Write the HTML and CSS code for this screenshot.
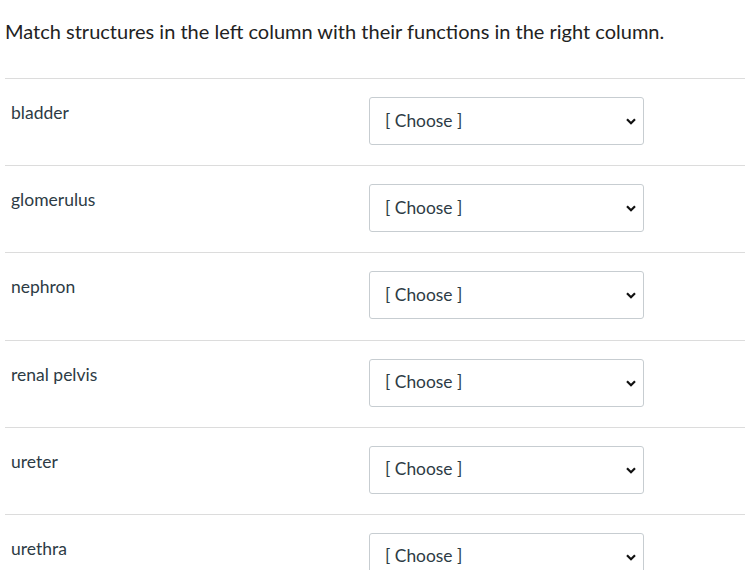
FILE: index.html
```html
<!DOCTYPE html>
<html>
<head>
<meta charset="utf-8">
<link rel="stylesheet" href="styles.css">
</head>
<body>
<div class="page">
  <p class="question">Match structures in the left column with their functions in the right column.</p>
  <div class="rows">
    <div class="row"><div class="label">bladder</div><div class="select"><span class="choose">[ Choose ]</span><svg class="chev" viewBox="0 0 10 7" width="10" height="7"><path d="M1 1.2 L5 5.2 L9 1.2" fill="none" stroke="#111" stroke-width="2.2"/></svg></div></div>
    <div class="row"><div class="label">glomerulus</div><div class="select"><span class="choose">[ Choose ]</span><svg class="chev" viewBox="0 0 10 7" width="10" height="7"><path d="M1 1.2 L5 5.2 L9 1.2" fill="none" stroke="#111" stroke-width="2.2"/></svg></div></div>
    <div class="row"><div class="label">nephron</div><div class="select"><span class="choose">[ Choose ]</span><svg class="chev" viewBox="0 0 10 7" width="10" height="7"><path d="M1 1.2 L5 5.2 L9 1.2" fill="none" stroke="#111" stroke-width="2.2"/></svg></div></div>
    <div class="row"><div class="label">renal pelvis</div><div class="select"><span class="choose">[ Choose ]</span><svg class="chev" viewBox="0 0 10 7" width="10" height="7"><path d="M1 1.2 L5 5.2 L9 1.2" fill="none" stroke="#111" stroke-width="2.2"/></svg></div></div>
    <div class="row"><div class="label">ureter</div><div class="select"><span class="choose">[ Choose ]</span><svg class="chev" viewBox="0 0 10 7" width="10" height="7"><path d="M1 1.2 L5 5.2 L9 1.2" fill="none" stroke="#111" stroke-width="2.2"/></svg></div></div>
    <div class="row"><div class="label">urethra</div><div class="select"><span class="choose">[ Choose ]</span><svg class="chev" viewBox="0 0 10 7" width="10" height="7"><path d="M1 1.2 L5 5.2 L9 1.2" fill="none" stroke="#111" stroke-width="2.2"/></svg></div></div>
  </div>
</div>
</body>
</html>
```

FILE: styles.css
```css
html, body {
  margin: 0;
  padding: 0;
  background: #fff;
}
body {
  font-family: Lato, "Open Sans", sans-serif;
  color: #2d3b45;
  overflow: hidden;
  height: 570px;
}
.page {
  padding-left: 5px;
}
.question {
  margin: 0;
  padding-top: 19px;
  height: 57px;
  box-sizing: border-box;
  font-size: 20px;
  line-height: 24px;
  color: #222;
}
.rows {
  margin-top: 21px;
}
.row {
  display: flex;
  align-items: flex-start;
  height: 87.2px;
  box-sizing: border-box;
  border-top: 1px solid #dcdcdc;
}
.label {
  width: 358px;
  padding-left: 6px;
  padding-top: 24px;
  font-size: 17.5px;
  line-height: 20px;
  color: #2d3b45;
}
.select {
  margin-top: 18px;
  width: 275px;
  height: 48px;
  box-sizing: border-box;
  border: 1px solid #c7cdd1;
  border-radius: 3px;
  display: flex;
  align-items: center;
  justify-content: space-between;
  padding: 0 7px 2px 15px;
}
.choose {
  font-size: 17.4px;
  color: #2d3b45;
}
.chev {
  margin-top: 3px;
}
```
